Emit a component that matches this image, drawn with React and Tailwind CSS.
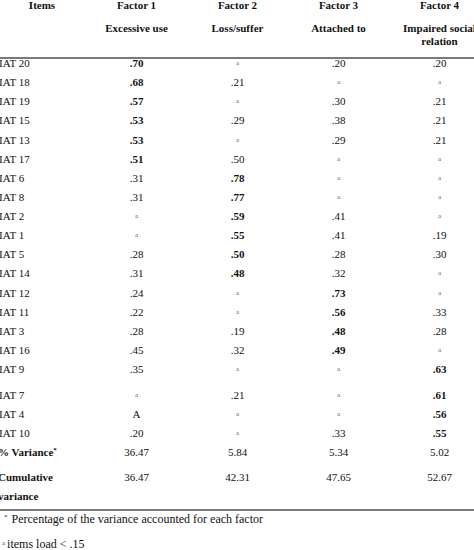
const A = () => <span className="text-[7px] text-[#666] relative top-[-2px]">a</span>;

const rows = [
  ["IAT 20", [".70", true], [A], [".20"], [".20"]],
  ["IAT 18", [".68", true], [".21"], [A], [A]],
  ["IAT 19", [".57", true], [A], [".30"], [".21"]],
  ["IAT 15", [".53", true], [".29"], [".38"], [".21"]],
  ["IAT 13", [".53", true], [A], [".29"], [".21"]],
  ["IAT 17", [".51", true], [".50"], [A], [A]],
  ["IAT 6", [".31"], [".78", true], [A], [A]],
  ["IAT 8", [".31"], [".77", true], [A], [A]],
  ["IAT 2", [A], [".59", true], [".41"], [A]],
  ["IAT 1", [A], [".55", true], [".41"], [".19"]],
  ["IAT 5", [".28"], [".50", true], [".28"], [".30"]],
  ["IAT 14", [".31"], [".48", true], [".32"], [A]],
  ["IAT 12", [".24"], [A], [".73", true], [A]],
  ["IAT 11", [".22"], [A], [".56", true], [".33"]],
  ["IAT 3", [".28"], [".19"], [".48", true], [".28"]],
  ["IAT 16", [".45"], [".32"], [".49", true], [A]],
  ["IAT 9", [".35"], [A], [A], [".63", true]],
  ["IAT 7", [A], [".21"], [A], [".61", true]],
  ["IAT 4", ["A"], [A], [A], [".56", true]],
  ["IAT 10", [".20"], [A], [".33"], [".55", true]],
];

const Cell = ({ v }) => {
  const [val, bold] = v;
  return (
    <div className={bold ? "text-center font-bold" : "text-center"}>
      {val === A ? <A /> : val}
    </div>
  );
};

const Row = ({ r, h }) => (
  <div className={`grid grid-cols-[88px_repeat(4,101px)] leading-[12px] ${h}`}>
    <div className="text-left pl-[1px]">{r[0]}</div>
    {r.slice(1).map((v, i) => (
      <Cell key={i} v={v} />
    ))}
  </div>
);

export default function App() {
  return (
    <div className="w-[474px] h-[550px] overflow-hidden bg-white text-[#111] text-[11px] font-['Liberation_Serif',serif]">
      <div className="ml-[-2px] w-[492px]">
        {/* header */}
        <div className="grid grid-cols-[88px_repeat(4,101px)] font-bold leading-[13px] text-center mt-[-1.5px]">
          <div>Items</div>
          <div>Factor 1</div>
          <div>Factor 2</div>
          <div>Factor 3</div>
          <div>Factor 4</div>
        </div>
        <div className="grid grid-cols-[88px_repeat(4,101px)] font-bold leading-[13px] text-center mt-[10px] h-[35.5px]">
          <div></div>
          <div>Excessive use</div>
          <div>Loss/suffer</div>
          <div>Attached to</div>
          <div>
            Impaired social
            <br />
            relation
          </div>
        </div>
        <div className="border-t-2 border-[#7a7a7a]"></div>

        <div className="mt-[-2px]">
          {rows.map((r, i) => {
            let h = "h-[19.125px]";
            if (i === 16) h = "h-[26px]";
            if (i > 16) h = "h-[19px]";
            return <Row key={r[0]} r={r} h={h} />;
          })}
          <div className="grid grid-cols-[88px_repeat(4,101px)] leading-[12px] h-[21.5px] text-center">
            <div className="text-left font-bold">
              % Variance<span className="text-[7px] relative top-[-4px]">*</span>
            </div>
            <div>36.47</div>
            <div>5.84</div>
            <div>5.34</div>
            <div>5.02</div>
          </div>
          <div className="grid grid-cols-[88px_repeat(4,101px)] leading-[19px] h-[38px] text-center">
            <div className="text-left font-bold">
              Cumulative
              <br />
              variance
            </div>
            <div>36.47</div>
            <div>42.31</div>
            <div>47.65</div>
            <div>52.67</div>
          </div>
        </div>

        <div className="mt-[3.5px] border-t-2 border-[#7a7a7a]"></div>
        <div className="text-[12px] leading-[14px] mt-[1px] pl-[6px]">
          <span className="text-[7px] relative top-[-4px]">*</span>
          <span className="ml-[4px]">Percentage of the variance accounted for each factor</span>
        </div>
        <div className="text-[12px] leading-[14px] mt-[9px] pl-[4px]">
          <span className="text-[7px] text-[#555] relative top-[-3px]">a</span>
          <span className="ml-[2px]">items load &lt; .15</span>
        </div>
      </div>
    </div>
  );
}
